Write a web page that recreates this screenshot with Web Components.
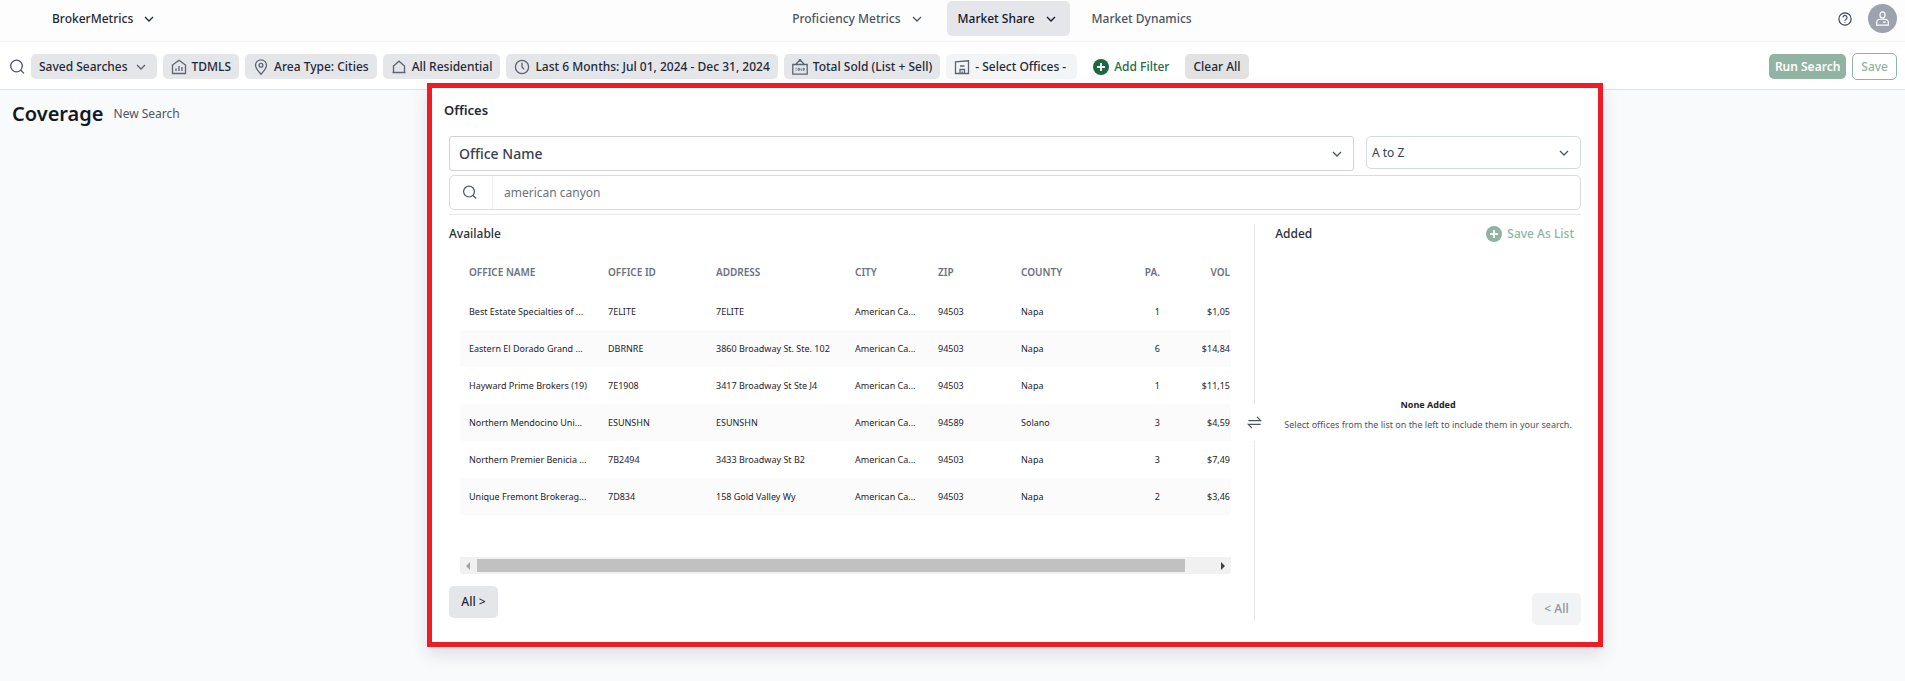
<!DOCTYPE html>
<html lang="en">
<head>
<meta charset="utf-8">
<title>BrokerMetrics – Coverage</title>
<style>
html, body { margin: 0; }
body {
  min-height: 100vh;
  background: #f9fafc;
  color: #1f2937;
  font: 500 12px/20px "Noto Sans", "Open Sans", sans-serif;
}
</style>
</head>
<body>
<broker-app></broker-app>
<script>
const define = (name, html, setup) => {
  const template = document.createElement('template');
  template.innerHTML = html;
  customElements.define(name, class extends HTMLElement {
    constructor() {
      super();
      this.attachShadow({ mode: 'open' }).append(template.content.cloneNode(true));
    }
    connectedCallback() { if (setup) setup(this, this.shadowRoot); }
  });
};

const ICONS = {
  search: '<circle cx="7.5" cy="7" r="5.8"/><path d="M11.8 11.2 15 14.4"/>',
  chevron: '<path d="M4 6l4 4 4-4"/>',
  mls: '<path d="M1.5 14.5V6L8 1.2 14.5 6v8.500z"/><path d="M5 12V9.500M8 12V7M11 12V8M5 12h.01"/>',
  pin: '<path d="M8 15.200C5 12 2.500 9.500 2.500 6.300a5.500 5.500 0 0 1 11 0C13.500 9.500 11 12 8 15.200z"/><circle cx="8" cy="6.300" r="1.900"/>',
  home: '<path d="M2.500 13.500V7L8 2.200 13.500 7v6.500zM1.500 13.500h13"/>',
  clock: '<circle cx="8" cy="8" r="6.600"/><path d="M8 3.800V8l2.200 2.400"/>',
  sold: '<path d="M.8 5.500h14.400v9.700H.8zM3.500 5.500 8 1l4.500 4.500"/><circle cx="8" cy="1.300" r=".7"/><path d="M3.500 9.300h1.200M3.500 11.300h1.200M6 9.300h1.500v2H6zM9 9.300v2h.8M11 9.300h1.300v2H11z" stroke-width=".8"/>',
  office: '<path d="M1.500 14.500V2.800l13-1v12.700zM6 14.500v-4h4.500v4M8.200 12.500v2M6 7h4.500"/>',
  plus: '<circle cx="8" cy="8" r="8" fill="currentColor" stroke="none"/><path d="M8 4v8M4 8h8" stroke="#fff" stroke-width="1.800"/>',
  help: '<circle cx="8" cy="8" r="7"/><path d="M5.700 6.200a2.300 2.300 0 1 1 3.500 2C8.400 8.700 8 9 8 9.900M8 11.700v.8"/>',
  user: '<ellipse cx="8" cy="4.300" rx="2.700" ry="3.300"/><path d="M1.800 15v-2.500c0-2.500 1.500-3.700 3.700-3.700h5c2.200 0 3.700 1.200 3.700 3.700V15zM8.500 11.800h3"/>',
  swap: '<path d="M1.500 6h13L10.700 2M14.500 10h-13L5.300 14"/>'
};

define('app-icon', `<style>
  :host { display: block; flex: none; width: 16px; height: 16px; }
  svg { display: block; width: 100%; height: 100%; fill: none; stroke: currentColor; stroke-width: 1.3; overflow: visible; }
</style><svg viewBox="0 0 16 16" aria-hidden="true"></svg>`,
(el, root) => { root.querySelector('svg').innerHTML = ICONS[el.getAttribute('name')]; });

define('nav-item', `<style>
  :host { display: block; color: #4b5563; }
  button { display: flex; align-items: center; gap: 8px; height: 35px; padding: 0 11px; border: 0; border-radius: 5px; background: none; color: inherit; font: inherit; white-space: nowrap; }
  :host([current]) { color: #111827; }
  :host([current]) button { background: #e5e6ea; }
</style><button type="button"><slot></slot><slot name="icon"></slot></button>`);

define('app-header', `<style>
  :host { display: grid; grid-template-columns: 9fr auto 8fr; align-items: start; padding: 1px 8px 5px 0; background: #fdfdfd; border-bottom: 1px solid #f0f1f3; }
  .brand { padding-left: 41px; display: flex; }
  .brand nav-item { color: #1f2937; }
  nav { display: flex; gap: 11px; }
  .tools { display: flex; align-items: center; justify-content: flex-end; gap: 16px; height: 35px; }
  .tools button { display: grid; place-items: center; padding: 0; border: 0; background: none; color: #374151; }
  .help app-icon { width: 14px; height: 14px; }
  .tools .avatar { width: 29px; height: 29px; border-radius: 50%; background: #9ca3af; color: #fff; }
  .avatar app-icon { width: 15px; height: 15px; }
</style>
<div class="brand"><nav-item>BrokerMetrics<app-icon slot="icon" name="chevron"></app-icon></nav-item></div>
<nav>
  <nav-item>Proficiency Metrics<app-icon slot="icon" name="chevron"></app-icon></nav-item>
  <nav-item current>Market Share<app-icon slot="icon" name="chevron"></app-icon></nav-item>
  <nav-item>Market Dynamics</nav-item>
</nav>
<div class="tools">
  <button type="button" class="help" aria-label="Help"><app-icon name="help"></app-icon></button>
  <button type="button" class="avatar" aria-label="Account"><app-icon name="user"></app-icon></button>
</div>`);

define('filter-chip', `<style>
  :host { display: block; color: #1f2937; }
  button { display: flex; align-items: center; gap: 5px; height: 25px; padding: 0 8px; border: 0; border-radius: 5px; background: #e5e6ea; color: inherit; font: inherit; white-space: nowrap; }
  ::slotted(app-icon) { color: #5b6472; }
  :host([tone="light"]) button { background: #f3f4f6; padding-right: 11px; }
  :host([tone="gray"]) button { background: #e2e2e2; }
  :host([tone="link"]) { color: #256a48; }
  :host([tone="link"]) button { background: none; padding: 0 10px; }
  :host([tone="link"]) ::slotted(app-icon) { color: #1f6644; }
  :host([tone="primary"]) button { background: #90b3a3; color: #fff; font-weight: 600; padding: 0 6px; }
  :host([tone="outline"]) button { height: 27px; background: #fff; border: 1px solid #90b3a3; color: #90b3a3; }
</style><button type="button"><slot name="icon"></slot><slot></slot><slot name="end"></slot></button>`);

define('filter-bar', `<style>
  :host { display: flex; align-items: center; gap: 6px; box-sizing: border-box; height: 48px; padding: 2px 8px 0 9px; background: #fff; border-bottom: 1px solid #dfe1e7; }
  .find { display: block; padding: 0; border: 0; background: none; color: #4b5563; }
  .push { margin-left: auto; }
</style>
<button type="button" class="find" aria-label="Search"><app-icon name="search"></app-icon></button>
<filter-chip>Saved Searches<app-icon slot="end" name="chevron"></app-icon></filter-chip>
<filter-chip><app-icon slot="icon" name="mls"></app-icon>TDMLS</filter-chip>
<filter-chip><app-icon slot="icon" name="pin"></app-icon>Area Type: Cities</filter-chip>
<filter-chip><app-icon slot="icon" name="home"></app-icon>All Residential</filter-chip>
<filter-chip><app-icon slot="icon" name="clock"></app-icon>Last 6 Months: Jul 01, 2024 - Dec 31, 2024</filter-chip>
<filter-chip><app-icon slot="icon" name="sold"></app-icon>Total Sold (List + Sell)</filter-chip>
<filter-chip tone="light"><app-icon slot="icon" name="office"></app-icon>- Select Offices -</filter-chip>
<filter-chip tone="link"><app-icon slot="icon" name="plus"></app-icon>Add Filter</filter-chip>
<filter-chip tone="gray">Clear All</filter-chip>
<filter-chip tone="primary" class="push">Run Search</filter-chip>
<filter-chip tone="outline">Save</filter-chip>`);

define('select-field', `<style>
  :host { display: grid; align-items: center; }
  select, app-icon { grid-area: 1 / 1; }
  select { appearance: none; width: 100%; height: 33px; margin: 0; padding: 0 32px 0 5px; border: 1px solid #d5dae0; border-radius: 5px; background: #fff; color: #374151; font: inherit; font-weight: 400; }
  app-icon { justify-self: end; margin-right: 9px; color: #4b5563; pointer-events: none; }
  :host([strong]) select { height: 35px; padding-left: 9px; border-color: #d0d2d5; border-radius: 3px; font-size: 14px; font-weight: 500; }
</style><select><option></option></select><app-icon name="chevron"></app-icon>`,
(el, root) => {
  root.querySelector('select').setAttribute('aria-label', el.getAttribute('label'));
  root.querySelector('option').textContent = el.getAttribute('value');
});

define('search-field', `<style>
  :host { display: flex; height: 33px; border: 1px solid #d8dce2; border-radius: 5px; background: #fff; color: #4b5563; }
  label { display: grid; place-items: center; box-sizing: border-box; width: 43px; padding-right: 3px; border-right: 1px solid #eceef1; }
  app-icon { width: 15px; height: 15px; }
  input { flex: 1; min-width: 0; padding: 0 11px; border: 0; background: none; color: #6b7280; font: inherit; font-weight: 400; outline: 0; }
</style><label for="q" aria-label="Search offices"><app-icon name="search"></app-icon></label><input id="q" type="text" value="american canyon">`);

const OFFICES = [
  ['Best Estate Specialties of ...', '7ELITE', '7ELITE', 'American Ca...', '94503', 'Napa', '1', '$1,05'],
  ['Eastern El Dorado Grand ...', 'DBRNRE', '3860 Broadway St. Ste. 102', 'American Ca...', '94503', 'Napa', '6', '$14,84'],
  ['Hayward Prime Brokers (19)', '7E1908', '3417 Broadway St Ste J4', 'American Ca...', '94503', 'Napa', '1', '$11,15'],
  ['Northern Mendocino Uni...', 'ESUNSHN', 'ESUNSHN', 'American Ca...', '94589', 'Solano', '3', '$4,59'],
  ['Northern Premier Benicia ...', '7B2494', '3433 Broadway St B2', 'American Ca...', '94503', 'Napa', '3', '$7,49'],
  ['Unique Fremont Brokerag...', '7D834', '158 Gold Valley Wy', 'American Ca...', '94503', 'Napa', '2', '$3,46']
];

define('office-table', `<style>
  :host { display: block; overflow: hidden; }
  table { width: 779px; table-layout: fixed; border-collapse: collapse; }
  th, td { padding: 0 9px; text-align: left; white-space: nowrap; }
  th { height: 43px; color: #6b7280; font-size: 10px; font-weight: 600; }
  td { height: 37px; color: #1f2328; font-size: 9px; font-weight: 400; }
  tbody tr:nth-child(even) { background: #fbfbfc; }
  :nth-child(n+7):is(th, td) { text-align: right; }
  .w139 { width: 139px; } .w108 { width: 108px; } .w83 { width: 83px; } .w74 { width: 74px; }
</style>
<table>
  <colgroup><col class="w139"><col class="w108"><col class="w139"><col class="w83"><col class="w83"><col class="w83"><col class="w74"><col></colgroup>
  <thead><tr><th>OFFICE NAME</th><th>OFFICE ID</th><th>ADDRESS</th><th>CITY</th><th>ZIP</th><th>COUNTY</th><th>PA.</th><th>VOL</th></tr></thead>
  <tbody></tbody>
</table>`,
(el, root) => {
  const body = root.querySelector('tbody');
  for (const office of OFFICES) {
    const row = body.insertRow();
    for (const value of office) row.insertCell().textContent = value;
  }
});

define('scroll-track', `<style>
  :host { display: flex; align-items: center; gap: 4px; height: 17px; padding: 0 5px; border-radius: 0 0 3px 3px; background: #f1f1f1; box-sizing: border-box; }
  .arrow { width: 0; height: 0; margin: 0 1px; border: 4px solid transparent; border-left-width: 0; border-right-color: #a3a3a3; }
  .arrow.next { border-width: 4px 0 4px 4px; border-color: transparent; border-left-color: #404040; }
  .rail { flex: 1; margin: 0 2px; }
  .thumb { width: 96%; height: 13px; background: #c1c1c1; }
</style><span class="arrow"></span><div class="rail"><div class="thumb"></div></div><span class="arrow next"></span>`);

define('move-button', `<style>
  :host { display: block; align-self: flex-start; }
  button { width: 49px; height: 32px; padding: 0; border: 0; border-radius: 5px; background: #e5e6ea; color: #1f2937; font: inherit; white-space: nowrap; }
  :host([off]) { align-self: flex-end; }
  :host([off]) button { background: #f2f3f5; color: #8e929a; }
</style><button type="button"><slot></slot></button>`,
(el, root) => { root.querySelector('button').disabled = el.hasAttribute('off'); });

define('office-picker', `<style>
  :host { display: block; box-sizing: border-box; padding: 12px 0 17px; border: 5px solid #ee1c25; background: #fff; box-shadow: 0 8px 16px rgba(30, 40, 60, .12); }
  h2 { margin: 0; padding: 0 12px; color: #1f2937; font-size: 13px; line-height: 20px; font-weight: 600; }
  .body { padding: 16px 17px 0; }
  .selects { display: grid; grid-template-columns: 1fr 19%; align-items: start; gap: 12px; }
  search-field { margin-top: 4px; }
  hr { height: 1px; margin: 4px 0 9px; border: 0; background: #e8e9eb; }
  .split { display: grid; grid-template-columns: minmax(0, 5fr) 16px minmax(0, 2fr); }
  h3 { margin: 0; color: #2b2f36; font-size: 12px; line-height: 20px; font-weight: 500; }
  .available, .added, .divider { display: flex; flex-direction: column; }
  .available { padding-bottom: 7px; }
  office-table { margin: 6px 15px 42px 11px; }
  scroll-track { margin: 0 15px 12px 11px; }
  .divider { align-items: center; gap: 11px; margin-bottom: 4px; color: #4b5563; }
  .divider i { flex: 1; width: 1px; background: #e5e7eb; }
  .divider app-icon { width: 15px; height: 15px; }
  .added { padding-left: 13px; }
  .top { display: flex; justify-content: space-between; }
  .save { display: flex; align-items: center; gap: 5px; height: 20px; padding: 0 7px; border: 0; background: none; color: #90b3a3; font: inherit; }
  .empty { flex: 1; display: flex; flex-direction: column; justify-content: center; padding-bottom: 7px; text-align: center; font-size: 9px; }
  .empty p { margin: 0; font-weight: 400; color: #4b5563; }
  .empty strong { color: #1f2328; }
</style>
<h2>Offices</h2>
<div class="body">
  <div class="selects">
    <select-field strong label="Search by" value="Office Name"></select-field>
    <select-field label="Sort order" value="A to Z"></select-field>
  </div>
  <search-field></search-field>
  <hr>
  <div class="split">
    <section class="available">
      <h3>Available</h3>
      <office-table></office-table>
      <scroll-track></scroll-track>
      <move-button>All &gt;</move-button>
    </section>
    <div class="divider"><i></i><app-icon name="swap"></app-icon><i></i></div>
    <section class="added">
      <div class="top"><h3>Added</h3><button type="button" class="save"><app-icon name="plus"></app-icon>Save As List</button></div>
      <div class="empty"><strong>None Added</strong><p>Select offices from the list on the left to include them in your search.</p></div>
      <move-button off>&lt; All</move-button>
    </section>
  </div>
</div>`);

define('page-title', `<style>
  :host { display: flex; align-items: center; gap: 10px; padding: 10px 12px; }
  h1 { margin: 0; color: #111827; font-size: 20px; line-height: 28px; font-weight: 600; }
  span { color: #4b5563; font-weight: 400; }
</style><h1><slot></slot></h1><span><slot name="note"></slot></span>`);

define('broker-app', `<style>
  :host { display: block; }
  main { position: relative; }
  office-picker { position: absolute; top: -7px; left: 427px; width: 1176px; max-width: calc(100% - 443px); }
</style>
<app-header></app-header>
<filter-bar></filter-bar>
<main>
  <page-title>Coverage<span slot="note">New Search</span></page-title>
  <office-picker></office-picker>
</main>`);
</script>
</body>
</html>
